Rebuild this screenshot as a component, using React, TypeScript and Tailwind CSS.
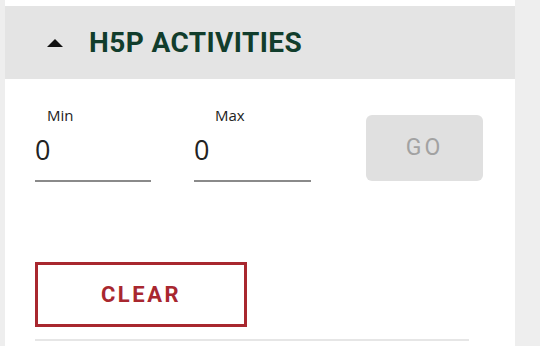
export default function App() {
  return (
    <div className="w-[540px] h-[346px] overflow-hidden bg-[#eeeeee] pl-[5px] pr-[25px]" style={{ fontFamily: "Roboto, 'Liberation Sans', sans-serif" }}>
      <div className="h-full bg-white pt-[6px]">
        {/* Section header */}
        <div className="h-[73px] bg-[#e4e4e4] flex items-center pl-[42px]">
          <svg width="16" height="8" viewBox="0 0 16 8" className="mr-[26px]">
            <path d="M8 0 L16 8 L0 8 Z" fill="#111" />
          </svg>
          <span className="text-[28px] font-bold tracking-[0.4px] text-[#113d2c]">H5P ACTIVITIES</span>
        </div>

        {/* Range inputs */}
        <div className="flex items-start pl-[30px] pt-[26px]">
          <div className="w-[116px]">
            <div className="pl-[12px] text-[15px] leading-[20px] text-[#222]" style={{ fontFamily: "'Open Sans', sans-serif" }}>Min</div>
            <div className="h-[57px] pt-[8px] border-b-2 border-[#8a8a8a] text-[27px] leading-[34px] text-[#222]" style={{ fontFamily: "'Open Sans', sans-serif" }}>0</div>
          </div>
          <div className="w-[117px] ml-[43px]">
            <div className="pl-[21px] text-[15px] leading-[20px] text-[#222]" style={{ fontFamily: "'Open Sans', sans-serif" }}>Max</div>
            <div className="h-[57px] pt-[8px] border-b-2 border-[#8a8a8a] text-[27px] leading-[34px] text-[#222]" style={{ fontFamily: "'Open Sans', sans-serif" }}>0</div>
          </div>
          <button className="ml-[55px] mt-[10px] w-[117px] h-[66px] rounded-[6px] bg-[#e0e0e0] text-[23px] tracking-[3px] text-[#a2a2a2]">
            GO
          </button>
        </div>

        {/* Clear */}
        <div className="pl-[30px] pt-[80px]">
          <button className="w-[212px] h-[65px] border-[3px] border-[#a8272f] text-[22px] font-bold tracking-[2.5px] text-[#a8272f]">
            CLEAR
          </button>
          <div className="mt-[12px] w-[434px] h-[2px] bg-[#e6e6e6]" />
        </div>
      </div>
    </div>
  );
}
